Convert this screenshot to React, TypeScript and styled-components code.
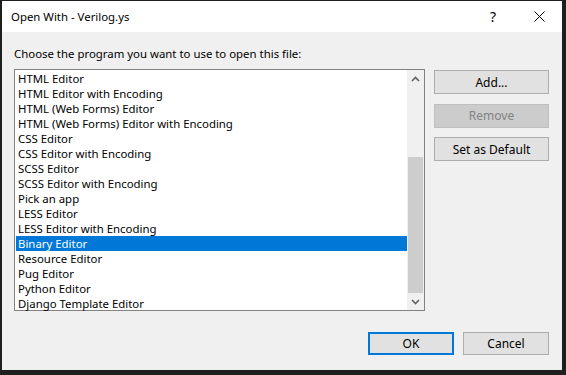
import styled, { createGlobalStyle } from "styled-components"

const GlobalStyle = createGlobalStyle`
    html, body {
        margin: 0;
        padding: 0;
        background: #1f1f1f;
    }
    body {
        font-family: "Noto Sans", "Open Sans", "Liberation Sans", sans-serif;
        font-size: 11.4px;
        color: #000;
    }
`

const Window = styled.div`
    margin: 1px 0 0 2px;
    width: 560px;
    height: 369px;
    background: #f0f0f0;
    display: flex;
    flex-direction: column;
`

const TitleBar = styled.div`
    height: 31px;
    background: #fff;
    display: flex;
    align-items: center;
    padding-left: 9px;
    #title {
        flex: 1;
    }
`

const CaptionButton = styled.div`
    width: 46px;
    height: 31px;
    display: flex;
    align-items: center;
    justify-content: center;
    font-size: 14px;
`

const Body = styled.div`
    flex: 1;
    padding: 14px 13px 15px 12px;
    display: flex;
    flex-direction: column;
`

const Label = styled.div`
    height: 15px;
    line-height: 15px;
`

const MainRow = styled.div`
    display: flex;
    gap: 9px;
    margin-top: 8px;
`

const ListBox = styled.div`
    width: 411px;
    height: 242px;
    box-sizing: border-box;
    border: 1px solid #828282;
    background: #fff;
    display: flex;
`

const Items = styled.div`
    flex: 1;
    padding: 1px 0 0 1px;
`

const Item = styled.div<{ $selected?: boolean }>`
    height: 15px;
    line-height: 15px;
    padding-left: 2px;
    white-space: nowrap;
    background: ${(p) => (p.$selected ? "#0078d7" : "transparent")};
    color: ${(p) => (p.$selected ? "#fff" : "#000")};
`

const ScrollBar = styled.div`
    width: 17px;
    background: #f0f0f0;
    display: flex;
    flex-direction: column;
`

const ScrollArrow = styled.div`
    height: 17px;
    display: flex;
    align-items: center;
    justify-content: center;
`

const Track = styled.div`
    flex: 1;
    display: flex;
    flex-direction: column;
    justify-content: flex-end;
`

const Thumb = styled.div`
    height: 136px;
    margin: 0 1px;
    background: #cdcdcd;
`

const ButtonColumn = styled.div`
    display: flex;
    flex-direction: column;
    gap: 9.5px;
    padding-top: 1px;
`

const Button = styled.div<{ $width: number; $default?: boolean; $disabled?: boolean }>`
    width: ${(p) => p.$width}px;
    height: ${(p) => (p.$default !== undefined ? 23 : 24)}px;
    box-sizing: border-box;
    display: flex;
    align-items: center;
    justify-content: center;
    font-size: 12px;
    background: ${(p) => (p.$disabled ? "#cccccc" : "#e1e1e1")};
    border: ${(p) =>
        p.$default ? "2px solid #0078d7" : p.$disabled ? "1px solid #bfbfbf" : "1px solid #adadad"};
    color: ${(p) => (p.$disabled ? "#838383" : "#000")};
`

const Footer = styled.div`
    display: flex;
    justify-content: flex-end;
    gap: 9px;
    margin-top: 21px;
`

const programs = [
    "HTML Editor",
    "HTML Editor with Encoding",
    "HTML (Web Forms) Editor",
    "HTML (Web Forms) Editor with Encoding",
    "CSS Editor",
    "CSS Editor with Encoding",
    "SCSS Editor",
    "SCSS Editor with Encoding",
    "Pick an app",
    "LESS Editor",
    "LESS Editor with Encoding",
    "Binary Editor",
    "Resource Editor",
    "Pug Editor",
    "Python Editor",
    "Django Template Editor",
]

const Chevron = ({ up }: { up?: boolean }) => (
    <svg width="9" height="6" viewBox="0 0 9 6">
        <path
            d={up ? "M1 5 L4.5 1.5 L8 5" : "M1 1 L4.5 4.5 L8 1"}
            fill="none"
            stroke="#606060"
            strokeWidth="1.6"
        />
    </svg>
)

const App = () => {
    return (
        <>
            <GlobalStyle />
            <Window>
                <TitleBar>
                    <span id="title">Open With - Verilog.ys</span>
                    <CaptionButton>?</CaptionButton>
                    <CaptionButton>
                        <svg width="11" height="11" viewBox="0 0 11 11">
                            <path d="M0.5 0.5 L10.5 10.5 M10.5 0.5 L0.5 10.5" stroke="#000" strokeWidth="1" />
                        </svg>
                    </CaptionButton>
                </TitleBar>
                <Body>
                    <Label>Choose the program you want to use to open this file:</Label>
                    <MainRow>
                        <ListBox>
                            <Items>
                                {programs.map((name, index) => (
                                    <Item key={index} $selected={name === "Binary Editor"}>
                                        {name}
                                    </Item>
                                ))}
                            </Items>
                            <ScrollBar>
                                <ScrollArrow>
                                    <Chevron up />
                                </ScrollArrow>
                                <Track>
                                    <Thumb />
                                </Track>
                                <ScrollArrow>
                                    <Chevron />
                                </ScrollArrow>
                            </ScrollBar>
                        </ListBox>
                        <ButtonColumn>
                            <Button $width={115}>Add...</Button>
                            <Button $width={115} $disabled>Remove</Button>
                            <Button $width={115}>Set as Default</Button>
                        </ButtonColumn>
                    </MainRow>
                    <Footer>
                        <Button $width={86} $default>OK</Button>
                        <Button $width={86} $default={false}>Cancel</Button>
                    </Footer>
                </Body>
            </Window>
        </>
    )
}

export default App
